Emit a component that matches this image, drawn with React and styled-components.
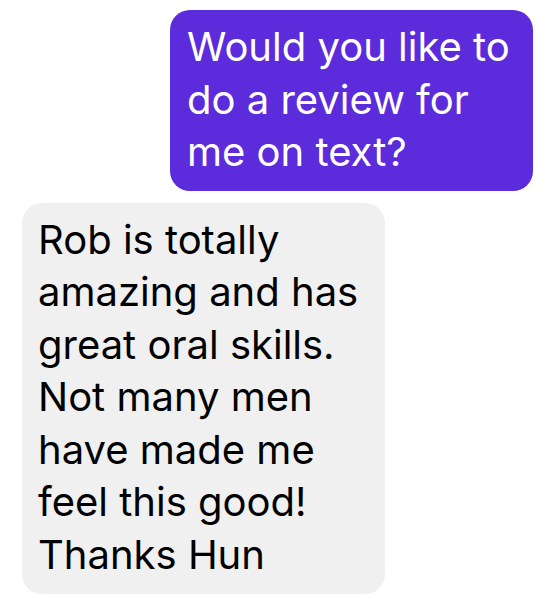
import React from 'react'
import styled, { createGlobalStyle } from 'styled-components'

const messages = [
  {
    id: 1,
    mine: true,
    lines: ['Would you like to', 'do a review for', 'me on text?'],
  },
  {
    id: 2,
    mine: false,
    lines: [
      'Rob is totally',
      'amazing and has',
      'great oral skills.',
      'Not many men',
      'have made me',
      'feel this good!',
      'Thanks Hun',
    ],
  },
]

const App = () => {
  return (
    <>
      <GlobalStyle />
      <Thread>
        {messages.map((msg) => (
          <Row key={msg.id} $mine={msg.mine}>
            <Bubble $mine={msg.mine}>
              {msg.lines.map((line, i) => (
                <Line key={i}>{line}</Line>
              ))}
            </Bubble>
          </Row>
        ))}
      </Thread>
    </>
  )
}

////////////////CSS////////////////

const GlobalStyle = createGlobalStyle`
body {
  margin: 0;
  background: #ffffff;
  font-family: Inter, "Liberation Sans", Arial, sans-serif;
}
`

const Thread = styled.div`
  width: 556px;
  height: 600px;
  box-sizing: border-box;
  padding: 10px 23px 0 22px;
  display: flex;
  flex-direction: column;
  gap: 12px;
  overflow: hidden;
`

const Row = styled.div`
  display: flex;
  justify-content: ${(p) => (p.$mine ? 'flex-end' : 'flex-start')};
`

const Bubble = styled.div`
  width: 363px;
  box-sizing: border-box;
  border-radius: 20px;
  padding: ${(p) => (p.$mine ? '11px 10px 12px 17px' : '11px 10px 13px 16px')};
  background: ${(p) => (p.$mine ? '#5c2bdc' : '#f0f0f0')};
  color: ${(p) => (p.$mine ? '#ffffff' : '#000000')};
  font-size: 40px;
  line-height: 52.5px;
`

const Line = styled.div`
  white-space: nowrap;
`

export default App
